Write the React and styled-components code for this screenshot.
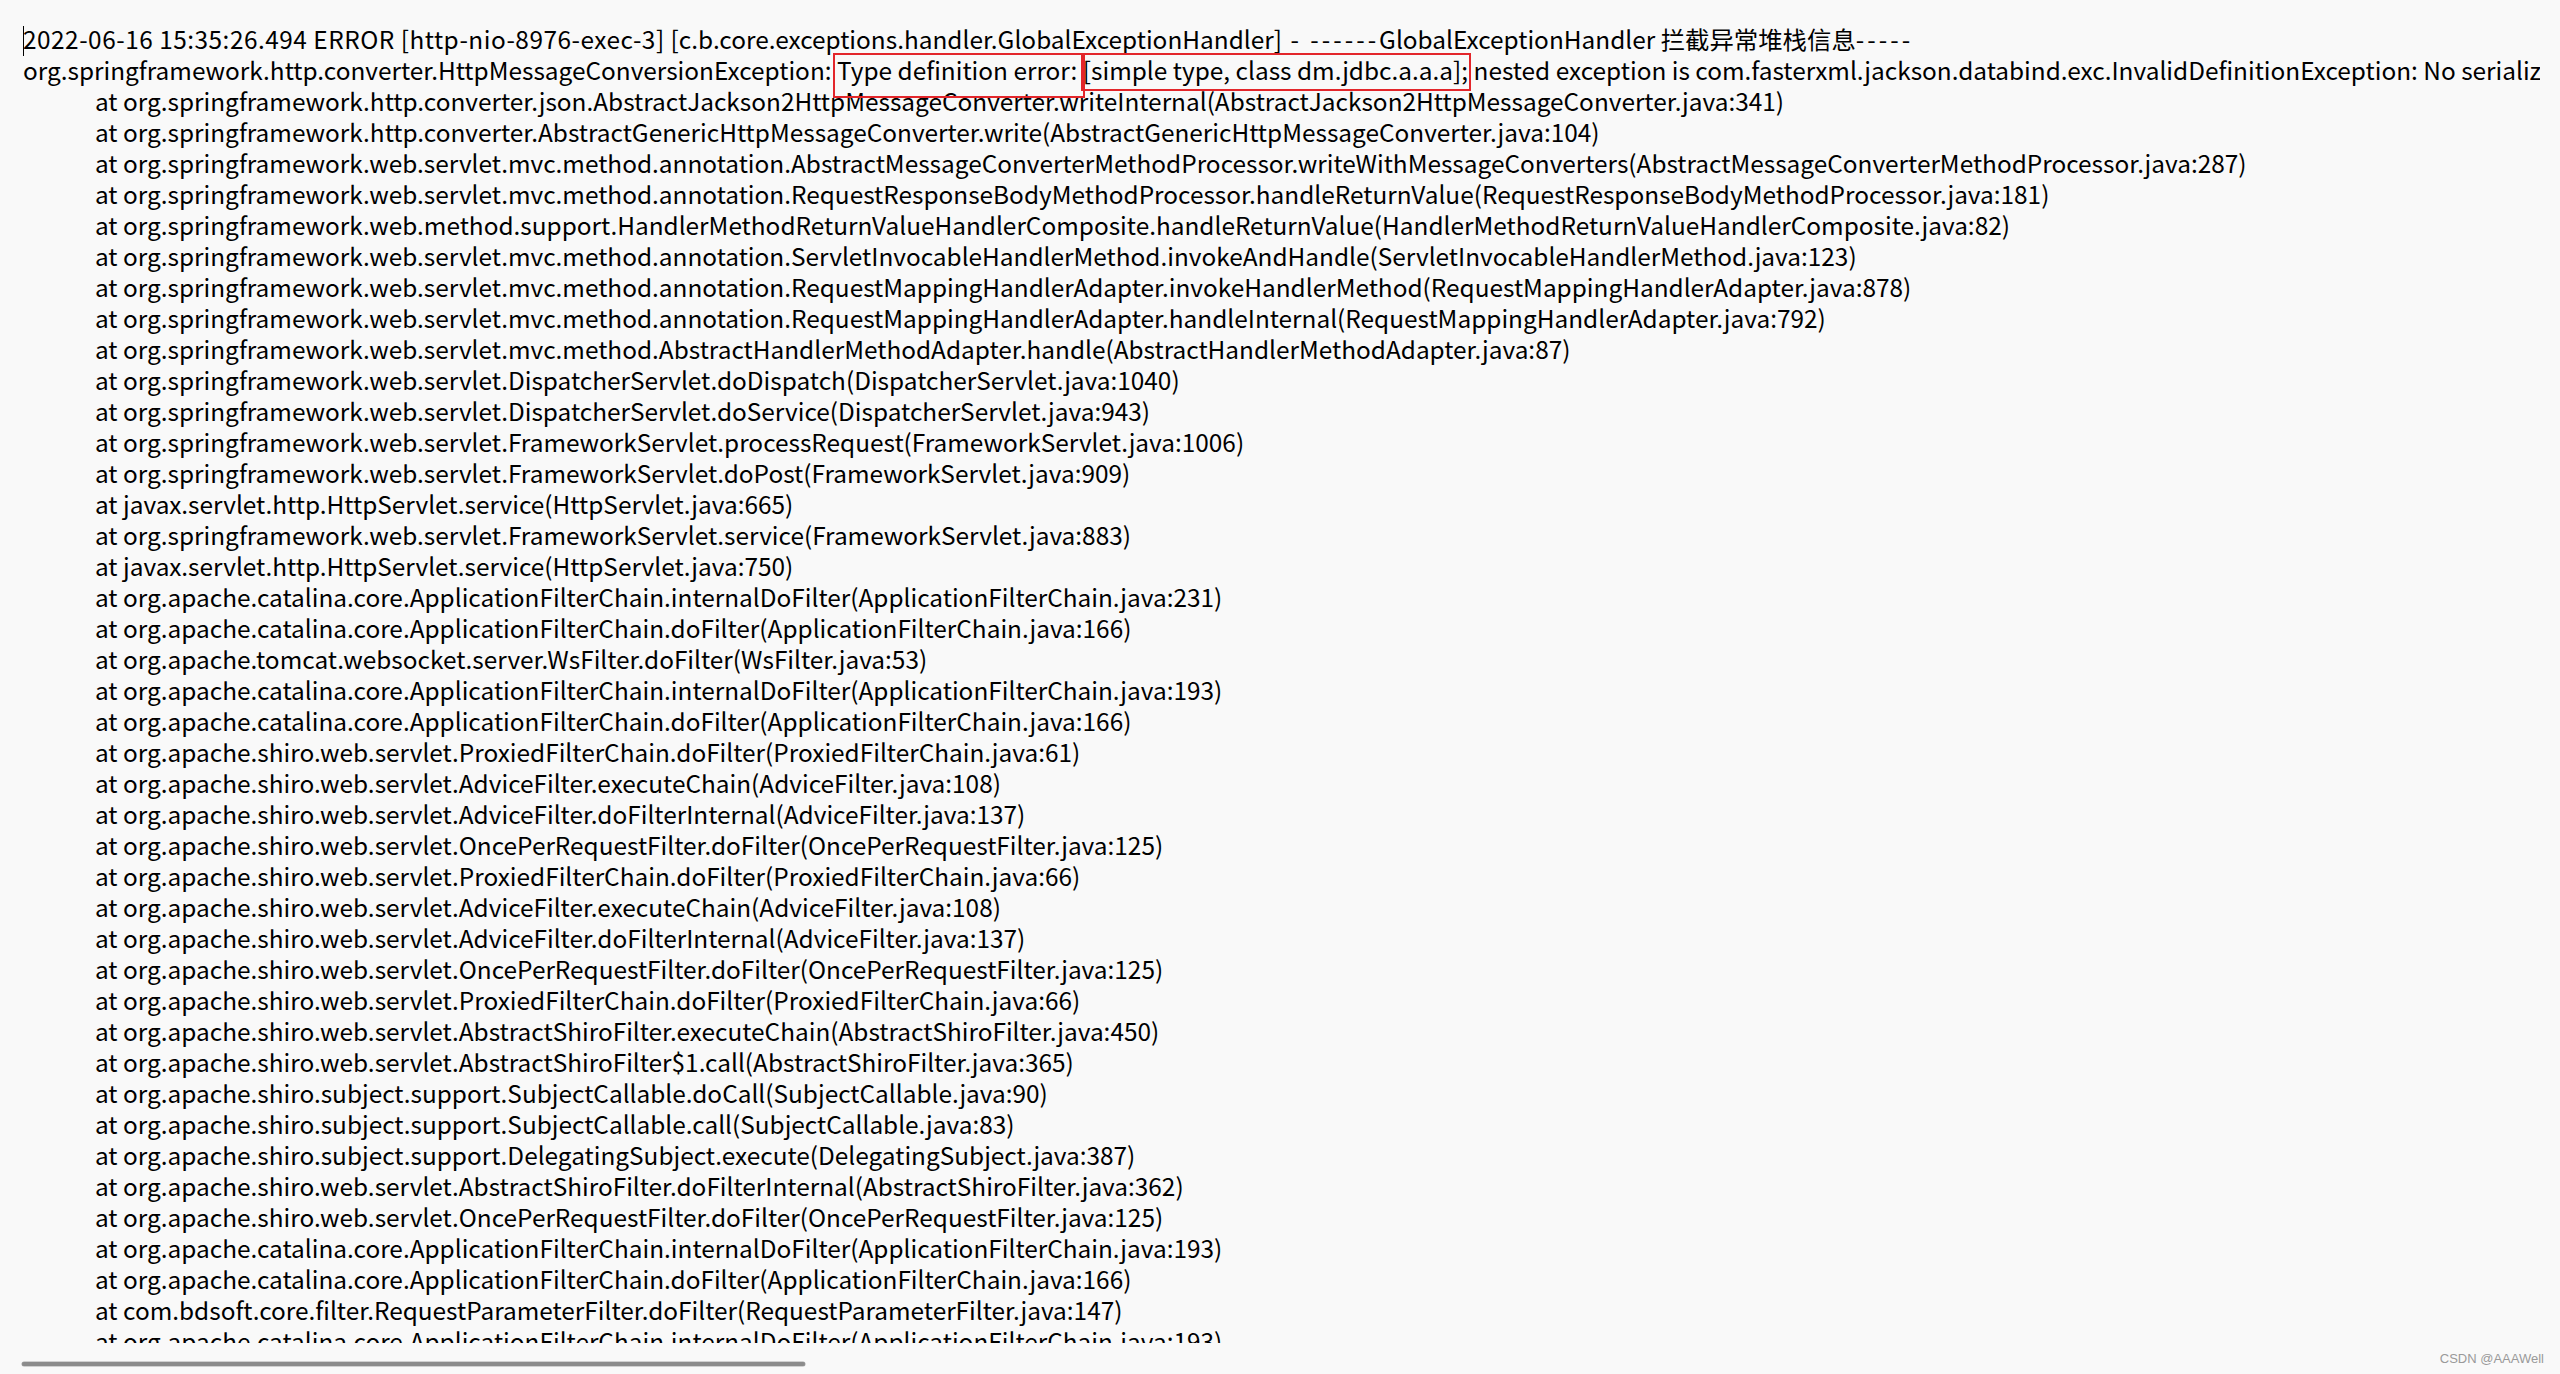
import React from "react";
import styled, { createGlobalStyle } from "styled-components";

const Global = createGlobalStyle`
  html, body { margin: 0; padding: 0; background: #f9f9f9; }
  body { overflow: hidden; }
`;

const Page = styled.div`
  position: relative;
  height: 100vh;
  display: flex;
  flex-direction: column;
  background: #f9f9f9;
  overflow: hidden;
`;

const Viewport = styled.div`
  height: 1343px;
  flex: none;
  margin-right: 20px;
  overflow: hidden;
  box-sizing: border-box;
  padding: 23px 0 0 23px;
  font-family: "Noto Sans CJK SC", "Noto Sans", sans-serif;
  font-size: 24.4px;
  color: #000;
`;

const Line = styled.div`
  white-space: pre;
  height: 31px;
  line-height: 31px;
  padding-left: ${(p) => (p.$indent ? "72px" : "0")};
`;

const Run = styled.span`
  letter-spacing: ${(p) => p.$ls}px;
`;

const Caret = styled.span`
  display: inline-block;
  width: 1px;
  height: 30px;
  background: #000;
  vertical-align: -7px;
  margin-right: -1px;
`;

const Mark = styled.span`
  position: relative;
  &::after {
    content: "";
    position: absolute;
    left: ${(p) => p.$left}px;
    right: ${(p) => p.$right}px;
    top: 1px;
    bottom: ${(p) => p.$bottom}px;
    border: 2px solid #e3262b;
    pointer-events: none;
  }
`;

const Track = styled.div`
  flex: none;
  margin-top: 19px;
  padding-left: 22px;
  display: flex;
`;

const Thumb = styled.div`
  width: 783px;
  height: 4px;
  border-radius: 2px;
  background: #8c8c8c;
  box-shadow: 0 0 0 0.5px #a8a8a8;
`;

const Watermark = styled.div`
  position: absolute;
  right: 16px;
  bottom: 8px;
  font-family: "Liberation Sans", Arial, sans-serif;
  font-size: 13px;
  color: #9a9a9a;
`;

const frames = [
  "org.springframework.http.converter.json.AbstractJackson2HttpMessageConverter.writeInternal(AbstractJackson2HttpMessageConverter.java:341)",
  "org.springframework.http.converter.AbstractGenericHttpMessageConverter.write(AbstractGenericHttpMessageConverter.java:104)",
  "org.springframework.web.servlet.mvc.method.annotation.AbstractMessageConverterMethodProcessor.writeWithMessageConverters(AbstractMessageConverterMethodProcessor.java:287)",
  "org.springframework.web.servlet.mvc.method.annotation.RequestResponseBodyMethodProcessor.handleReturnValue(RequestResponseBodyMethodProcessor.java:181)",
  "org.springframework.web.method.support.HandlerMethodReturnValueHandlerComposite.handleReturnValue(HandlerMethodReturnValueHandlerComposite.java:82)",
  "org.springframework.web.servlet.mvc.method.annotation.ServletInvocableHandlerMethod.invokeAndHandle(ServletInvocableHandlerMethod.java:123)",
  "org.springframework.web.servlet.mvc.method.annotation.RequestMappingHandlerAdapter.invokeHandlerMethod(RequestMappingHandlerAdapter.java:878)",
  "org.springframework.web.servlet.mvc.method.annotation.RequestMappingHandlerAdapter.handleInternal(RequestMappingHandlerAdapter.java:792)",
  "org.springframework.web.servlet.mvc.method.AbstractHandlerMethodAdapter.handle(AbstractHandlerMethodAdapter.java:87)",
  "org.springframework.web.servlet.DispatcherServlet.doDispatch(DispatcherServlet.java:1040)",
  "org.springframework.web.servlet.DispatcherServlet.doService(DispatcherServlet.java:943)",
  "org.springframework.web.servlet.FrameworkServlet.processRequest(FrameworkServlet.java:1006)",
  "org.springframework.web.servlet.FrameworkServlet.doPost(FrameworkServlet.java:909)",
  "javax.servlet.http.HttpServlet.service(HttpServlet.java:665)",
  "org.springframework.web.servlet.FrameworkServlet.service(FrameworkServlet.java:883)",
  "javax.servlet.http.HttpServlet.service(HttpServlet.java:750)",
  "org.apache.catalina.core.ApplicationFilterChain.internalDoFilter(ApplicationFilterChain.java:231)",
  "org.apache.catalina.core.ApplicationFilterChain.doFilter(ApplicationFilterChain.java:166)",
  "org.apache.tomcat.websocket.server.WsFilter.doFilter(WsFilter.java:53)",
  "org.apache.catalina.core.ApplicationFilterChain.internalDoFilter(ApplicationFilterChain.java:193)",
  "org.apache.catalina.core.ApplicationFilterChain.doFilter(ApplicationFilterChain.java:166)",
  "org.apache.shiro.web.servlet.ProxiedFilterChain.doFilter(ProxiedFilterChain.java:61)",
  "org.apache.shiro.web.servlet.AdviceFilter.executeChain(AdviceFilter.java:108)",
  "org.apache.shiro.web.servlet.AdviceFilter.doFilterInternal(AdviceFilter.java:137)",
  "org.apache.shiro.web.servlet.OncePerRequestFilter.doFilter(OncePerRequestFilter.java:125)",
  "org.apache.shiro.web.servlet.ProxiedFilterChain.doFilter(ProxiedFilterChain.java:66)",
  "org.apache.shiro.web.servlet.AdviceFilter.executeChain(AdviceFilter.java:108)",
  "org.apache.shiro.web.servlet.AdviceFilter.doFilterInternal(AdviceFilter.java:137)",
  "org.apache.shiro.web.servlet.OncePerRequestFilter.doFilter(OncePerRequestFilter.java:125)",
  "org.apache.shiro.web.servlet.ProxiedFilterChain.doFilter(ProxiedFilterChain.java:66)",
  "org.apache.shiro.web.servlet.AbstractShiroFilter.executeChain(AbstractShiroFilter.java:450)",
  "org.apache.shiro.web.servlet.AbstractShiroFilter$1.call(AbstractShiroFilter.java:365)",
  "org.apache.shiro.subject.support.SubjectCallable.doCall(SubjectCallable.java:90)",
  "org.apache.shiro.subject.support.SubjectCallable.call(SubjectCallable.java:83)",
  "org.apache.shiro.subject.support.DelegatingSubject.execute(DelegatingSubject.java:387)",
  "org.apache.shiro.web.servlet.AbstractShiroFilter.doFilterInternal(AbstractShiroFilter.java:362)",
  "org.apache.shiro.web.servlet.OncePerRequestFilter.doFilter(OncePerRequestFilter.java:125)",
  "org.apache.catalina.core.ApplicationFilterChain.internalDoFilter(ApplicationFilterChain.java:193)",
  "org.apache.catalina.core.ApplicationFilterChain.doFilter(ApplicationFilterChain.java:166)",
  "com.bdsoft.core.filter.RequestParameterFilter.doFilter(RequestParameterFilter.java:147)",
  "org.apache.catalina.core.ApplicationFilterChain.internalDoFilter(ApplicationFilterChain.java:193)",
];

export default function App() {
  return (
    <>
      <Global />
      <Page>
        <Viewport>
          <Line>
            <Caret />
            <Run $ls={0.5}>{"2022-06-16 15:35:26.494 ERROR [http-nio-8976-exec-3] "}</Run>
            <Run $ls={0}>{"[c.b.core.exceptions.handler.GlobalExceptionHandler]"}</Run>
            <Run $ls={3}>{" - ------"}</Run>
            <Run $ls={0}>{"GlobalExceptionHandler "}</Run>
            <Run $ls={0}>{"拦截异常堆栈信息"}</Run>
            <Run $ls={3}>{"-----"}</Run>
          </Line>
          <Line>
            {"org.springframework.http.converter.HttpMessageConversionException: "}
            <Mark $left={-4} $right={-2} $bottom={-11}>Type definition error: </Mark>
            <Mark $left={-2} $right={-3} $bottom={-4}>[simple type, class dm.jdbc.a.a.a];</Mark>
            {" nested exception is com.fasterxml.jackson.databind.exc.InvalidDefinitionException: No serializer found for class dm.jdbc.a.a.a and no properties discovered to create BeanSerializer"}
          </Line>
          {frames.map((f, i) => (
            <Line key={i} $indent>
              {"at " + f}
            </Line>
          ))}
        </Viewport>
        <Track>
          <Thumb />
        </Track>
        <Watermark>CSDN @AAAWell</Watermark>
      </Page>
    </>
  );
}
